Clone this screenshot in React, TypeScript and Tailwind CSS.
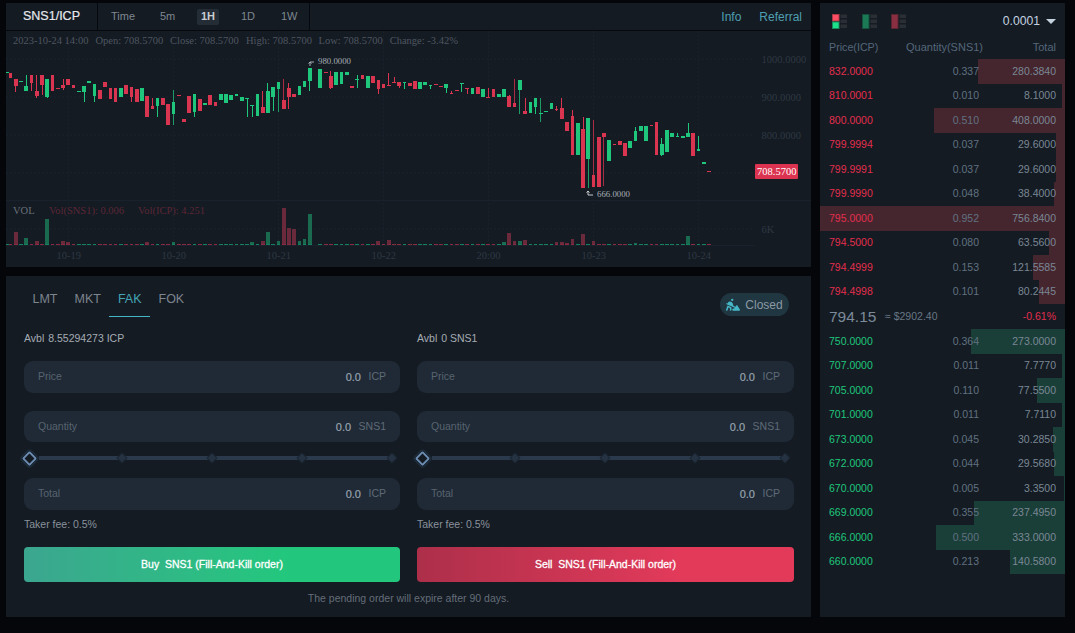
import { FaPersonDigging } from "react-icons/fa6";

const R = "#d93450";
const G = "#1fc77c";
const RD = "#6a2a3c";
const GD = "#1a6a50";

// [x, bodyTop, bodyBottom, wickTop, wickBottom, up(1)/down(0)] in 3x page coordinates
const c: number[][] = [
  [20, 216, 219, 216, 219, 1], [31, 218, 234, 218, 234, 0], [47, 237, 257, 237, 275, 0], [63, 243, 247, 243, 247, 1],
  [78, 258, 272, 225, 272, 1], [94, 224, 248, 224, 272, 0], [110, 273, 287, 224, 293, 0], [126, 224, 255, 224, 285, 0],
  [141, 237, 290, 237, 294, 1], [157, 225, 272, 225, 272, 0], [173, 264, 266, 264, 266, 0], [189, 255, 263, 238, 270, 0],
  [204, 237, 255, 237, 255, 0], [220, 255, 265, 255, 265, 0], [236, 272, 274, 272, 274, 1], [252, 258, 275, 258, 305, 1],
  [267, 243, 248, 243, 248, 1], [283, 252, 287, 252, 305, 1], [299, 270, 296, 270, 296, 0], [315, 247, 261, 247, 261, 0],
  [331, 264, 296, 264, 296, 0], [346, 265, 305, 265, 305, 0], [362, 265, 290, 265, 290, 1], [378, 255, 282, 255, 282, 0],
  [394, 261, 290, 261, 305, 0], [410, 268, 305, 268, 305, 0], [425, 264, 304, 264, 304, 1], [441, 288, 352, 288, 352, 0],
  [457, 318, 326, 293, 326, 0], [472, 294, 318, 294, 352, 1], [488, 294, 315, 294, 315, 0], [504, 312, 374, 312, 374, 0],
  [520, 306, 342, 270, 375, 1], [536, 285, 288, 285, 288, 0], [551, 358, 365, 358, 365, 0], [567, 288, 340, 288, 340, 0],
  [583, 282, 335, 282, 352, 1], [599, 297, 332, 297, 332, 0], [614, 310, 316, 310, 316, 1], [630, 285, 314, 285, 314, 0],
  [646, 305, 317, 305, 317, 0], [662, 282, 300, 282, 300, 1], [677, 282, 308, 282, 308, 1], [693, 286, 300, 286, 300, 1],
  [709, 282, 288, 282, 288, 1], [725, 291, 302, 291, 302, 1], [741, 293, 295, 293, 352, 1], [756, 315, 317, 315, 350, 1],
  [772, 282, 347, 282, 347, 1], [788, 321, 338, 272, 338, 0], [803, 274, 338, 248, 338, 1], [819, 261, 291, 261, 333, 1],
  [835, 247, 268, 247, 335, 1], [851, 300, 326, 237, 326, 0], [866, 264, 291, 248, 326, 0], [882, 282, 291, 282, 291, 0],
  [898, 258, 285, 258, 285, 1], [913, 243, 261, 243, 261, 1], [929, 204, 243, 204, 272, 1], [960, 207, 265, 207, 265, 1],
  [977, 217, 220, 217, 220, 0], [992, 229, 265, 213, 268, 0], [1008, 216, 255, 216, 255, 1], [1024, 216, 253, 216, 253, 1],
  [1040, 216, 224, 216, 224, 1], [1056, 258, 263, 258, 263, 0], [1071, 238, 240, 225, 265, 1], [1087, 225, 236, 225, 236, 0],
  [1103, 229, 264, 229, 264, 1], [1119, 229, 249, 229, 249, 0], [1135, 240, 266, 240, 282, 0], [1150, 253, 264, 253, 264, 0],
  [1166, 256, 258, 220, 258, 0], [1182, 246, 248, 232, 248, 0], [1197, 245, 259, 245, 265, 0], [1213, 245, 249, 245, 267, 1],
  [1229, 250, 258, 250, 258, 0], [1245, 244, 266, 244, 266, 0], [1260, 247, 266, 247, 266, 1], [1275, 247, 254, 247, 254, 1],
  [1291, 255, 257, 255, 266, 1], [1307, 252, 254, 252, 254, 0], [1322, 258, 260, 258, 260, 0], [1338, 253, 265, 253, 278, 1],
  [1354, 279, 281, 273, 281, 0], [1370, 270, 272, 270, 272, 0], [1385, 250, 252, 250, 275, 1], [1401, 264, 266, 264, 282, 0],
  [1417, 265, 282, 265, 282, 1], [1433, 261, 282, 261, 282, 0], [1449, 267, 290, 267, 290, 1], [1464, 291, 293, 264, 293, 0],
  [1480, 268, 291, 268, 291, 0], [1496, 282, 290, 282, 290, 1], [1512, 267, 290, 267, 290, 1], [1527, 288, 321, 285, 321, 0],
  [1543, 308, 321, 237, 321, 0], [1559, 240, 270, 240, 342, 1], [1575, 333, 342, 294, 342, 0], [1591, 305, 339, 305, 339, 1],
  [1606, 294, 320, 294, 342, 1], [1622, 339, 341, 294, 365, 1], [1638, 333, 335, 333, 335, 1], [1654, 310, 327, 310, 327, 1],
  [1669, 327, 329, 318, 332, 0], [1685, 324, 357, 294, 357, 0], [1701, 365, 392, 365, 392, 0], [1717, 348, 465, 331, 465, 0],
  [1733, 368, 465, 368, 465, 1], [1749, 388, 563, 352, 563, 0], [1764, 354, 477, 354, 564, 1], [1780, 525, 561, 360, 561, 0],
  [1796, 412, 561, 412, 561, 0], [1811, 400, 410, 400, 558, 0], [1827, 420, 483, 420, 483, 1], [1843, 432, 434, 432, 434, 0],
  [1859, 423, 435, 423, 435, 0], [1875, 428, 467, 428, 467, 0], [1890, 424, 443, 424, 443, 1], [1906, 393, 423, 380, 423, 1],
  [1922, 378, 393, 378, 393, 1], [1938, 378, 423, 378, 423, 1], [1954, 375, 377, 375, 377, 0], [1969, 365, 465, 365, 465, 0],
  [1985, 432, 465, 414, 468, 1], [2001, 390, 456, 390, 456, 1], [2016, 400, 410, 400, 410, 1], [2032, 409, 411, 400, 412, 1],
  [2048, 408, 413, 408, 413, 1], [2064, 400, 410, 369, 412, 1], [2079, 399, 468, 399, 468, 0], [2095, 447, 453, 408, 453, 1],
  [2111, 486, 491, 486, 491, 1], [2127, 514, 516, 514, 516, 0],
];

// [x, top, up] in 3x page coordinates
const vol: number[][] = [
  [47, 696, 0], [78, 714, 1], [110, 723, 0], [141, 657, 1], [189, 723, 0], [204, 726, 0], [441, 726, 0], [520, 726, 1],
  [756, 726, 1], [788, 723, 0], [803, 696, 1], [835, 723, 1], [851, 624, 0], [866, 684, 0], [882, 687, 0], [898, 723, 1],
  [913, 717, 1], [929, 642, 1], [1134, 723, 0], [1166, 720, 0], [1512, 726, 1], [1527, 698, 0], [1543, 723, 0], [1559, 723, 1],
  [1575, 720, 0], [1669, 726, 0], [1685, 726, 0], [1701, 729, 0], [1717, 717, 0], [1749, 702, 0], [1780, 723, 0], [1906, 729, 1],
  [2064, 708, 1],
];

const gridX = [68.3, 173.3, 278.3, 383.3, 488.3, 593.3, 698.3];
const gridY = [59, 97, 135, 173, 229];

function Chart() {
  return (
    <svg viewBox="6 31 805 236" className="block h-[236px] w-[805px] font-['Liberation_Serif',serif]">
      {gridX.map((x) => (
        <line key={x} x1={x} x2={x} y1={31} y2={245} stroke="#19222c" strokeWidth={1} strokeDasharray="2 2" />
      ))}
      {gridY.map((y) => (
        <line key={y} x1={6} x2={755} y1={y} y2={y} stroke="#19222c" strokeWidth={1} strokeDasharray="2 2" />
      ))}
      <line x1={6} x2={811} y1={200.5} y2={200.5} stroke="#19222c" />
      <line x1={6} x2={755} y1={245.5} y2={245.5} stroke="#19222c" />

      <g fontSize={10.5} fill="#4f5660">
        <text x={13} y={44}>2023-10-24 14:00</text>
        <text x={95.5} y={44}>Open: 708.5700</text>
        <text x={170} y={44}>Close: 708.5700</text>
        <text x={246} y={44}>High: 708.5700</text>
        <text x={318.5} y={44}>Low: 708.5700</text>
        <text x={389.7} y={44}>Change: -3.42%</text>
      </g>

      <g transform="scale(0.33333)" shapeRendering="crispEdges">
        {c.map(([x, t, b, wt, wb, up], i) => (
          <g key={i} fill={up ? G : R}>
            <rect x={x - 1} y={wt} width={3} height={wb - wt} opacity={wb - wt > b - t + 60 ? 0.75 : 1} />
            <rect x={x - 5} y={t} width={11} height={Math.max(b - t, 3)} />
          </g>
        ))}
        {vol.map(([x, t, up], i) => (
          <rect key={i} x={x - 5} y={t} width={11} height={734 - t} fill={up ? GD : RD} />
        ))}
        {c.map(([x, , , , , up], i) => (
          <rect key={i} x={x - 5} y={732} width={11} height={3} fill={up ? "#15805c" : "#8a2a40"} />
        ))}
      </g>

      <g fontSize={10.5} fill="#2f3842">
        <text x={761.5} y={63}>1000.0000</text>
        <text x={761.5} y={101}>900.0000</text>
        <text x={761.5} y={139}>800.0000</text>
        <text x={761.5} y={233}>6K</text>
        <text x={56.5} y={259}>10-19</text>
        <text x={161.5} y={259}>10-20</text>
        <text x={266.5} y={259}>10-21</text>
        <text x={371.5} y={259}>10-22</text>
        <text x={476.5} y={259}>20:00</text>
        <text x={581.5} y={259}>10-23</text>
        <text x={686.5} y={259}>10-24</text>
      </g>

      <g fontSize={8.8} fill="#a8adb3">
        <text x={318} y={64}>980.0000</text>
        <text x={597} y={197}>666.0000</text>
      </g>
      <path d="M314 62h-4v4M308.500 63.500l1.500-1.500 1.500 1.500" fill="none" stroke="#a8adb3" strokeWidth={1} />
      <path d="M593 195h-5v-4M586.500 192.500l1.500-1.500 1.500 1.500" fill="none" stroke="#c8ccd0" strokeWidth={1} />

      <rect x={755} y={164} width={43} height={15} rx={1} fill="#dc3350" />
      <text x={757} y={175} fontSize={10.5} fill="#ffffff">708.5700</text>

      <g fontSize={10.5}>
        <text x={13} y={214} fill="#6a7078">VOL</text>
        <text x={49} y={214} fill="#5c2636">Vol(SNS1): 0.006</text>
        <text x={138} y={214} fill="#5c2636">Vol(ICP): 4.251</text>
      </g>
    </svg>
  );
}

function Field({ label, unit, className = "" }: { label: string; unit: string; className?: string }) {
  return (
    <div className={"flex items-center justify-between rounded-[9px] bg-[#1f2a36] px-[14px] text-[10.5px] " + className}>
      <span className="-mt-[1px] text-[#58636f]">{label}</span>
      <span className="flex items-center gap-[7.5px]">
        <span className="text-[11px] text-[#98a3ae] [-webkit-text-stroke:0.2px_#98a3ae]">0.0</span>
        <span className="-mt-[1px] text-[#5f6a76]">{unit}</span>
      </span>
    </div>
  );
}

function Slider({ track, stops }: { track: string; stops: string[] }) {
  return (
    <div className="relative mt-[9px] h-[14px]">
      <div className={"absolute left-[15px] top-[5px] h-[4px] bg-[#2a394b] " + track} />
      {stops.map((s) => (
        <div key={s} className={"absolute top-[3px] h-[8px] w-[8px] rotate-45 rounded-[1px] border border-[#1b2633] bg-[#253241] " + s} />
      ))}
      <div className="absolute left-0 top-[1.500px] h-[11px] w-[11px] rotate-45 rounded-[1.500px] border-[2px] border-[#6b8bb0] bg-[#141b23] outline outline-[2.500px] outline-[#1c2a38]" />
    </div>
  );
}

function Side({ avbl, action, btn, width }: { avbl: string; action: string; btn: string; width: string }) {
  return (
    <div className={width}>
      <div className="flex h-[14px] gap-[4px] text-[10.5px] leading-[14px] text-[#a5acb4]">
        <span>Avbl</span>
        <span>{avbl}</span>
      </div>
      <Field label="Price" unit="ICP" className="mt-[16px] h-[32px]" />
      <Field label="Quantity" unit="SNS1" className="mt-[18px] h-[31px] pt-[1px]" />
      <Slider track="right-[8px]" stops={["left-[94px]", "left-[184px]", "left-[274px]", "left-[364px]"]} />
      <Field label="Total" unit="ICP" className="mt-[13px] h-[32px]" />
      <div className="mt-[7px] h-[14px] text-[10.5px] leading-[14px] text-[#8a929b]">Taker fee: 0.5%</div>
      <button className={"mt-[16px] flex h-[35px] w-full items-center justify-center rounded-[4px] text-[10.5px] text-white [-webkit-text-stroke:0.3px_#ffffff] " + btn}>
        {action}&nbsp; SNS1 (Fill-And-Kill order)
      </button>
    </div>
  );
}

const asks: [string, string, string, number][] = [
  ["832.0000", "0.337", "280.3840", 87], ["810.0001", "0.010", "8.1000", 3], ["800.0000", "0.510", "408.0000", 131],
  ["799.9994", "0.037", "29.6000", 9], ["799.9991", "0.037", "29.6000", 9], ["799.9990", "0.048", "38.4000", 11],
  ["795.0000", "0.952", "756.8400", 245], ["794.5000", "0.080", "63.5600", 16], ["794.4999", "0.153", "121.5585", 32],
  ["794.4998", "0.101", "80.2445", 26],
];
const bids: [string, string, string, number][] = [
  ["750.0000", "0.364", "273.0000", 94], ["707.0000", "0.011", "7.7770", 3], ["705.0000", "0.110", "77.5500", 28],
  ["701.0000", "0.011", "7.7110", 3], ["673.0000", "0.045", "30.2850", 12], ["672.0000", "0.044", "29.5680", 11],
  ["670.0000", "0.005", "3.3500", 1], ["669.0000", "0.355", "237.4950", 91], ["666.0000", "0.500", "333.0000", 129],
  ["660.0000", "0.213", "140.5800", 55],
];

function Row({ d, side }: { d: [string, string, string, number]; side: "a" | "b" }) {
  return (
    <div className="relative flex h-[24.500px] items-center px-[9px] pt-[1px] text-[10.500px]">
      <div className={"absolute bottom-0 right-0 top-0 " + (side === "a" ? "bg-[#45262f]" : "bg-[#1a3f39]")} style={{ width: d[3] }} />
      <span className={"relative w-[100px] " + (side === "a" ? "text-[#e32e4d]" : "text-[#1fc77c]")}>{d[0]}</span>
      <span className="relative w-[50px] text-right text-[#617180]">{d[1]}</span>
      <span className="relative flex-1 text-right text-[#7a8794]">{d[2]}</span>
    </div>
  );
}

function BookLines() {
  return (
    <>
      <rect x="8.500" y="0.500" width="6.500" height="3.500" fill="#2a2f35" />
      <rect x="8.500" y="5.500" width="6.500" height="3.500" fill="#2a2f35" />
      <rect x="8.500" y="10.500" width="6.500" height="3.500" fill="#2a2f35" />
    </>
  );
}

function BookIcons() {
  return (
    <div className="flex gap-[14.500px]">
      <svg width="15" height="15" viewBox="0 0 15 15" className="block">
        <rect x="0.500" y="0.500" width="6.500" height="6.500" fill="#ff4d63" stroke="#a83a48" />
        <rect x="0.500" y="8" width="6.500" height="6.500" fill="#1de08a" stroke="#178a5c" />
        <BookLines />
      </svg>
      <svg width="15" height="15" viewBox="0 0 15 15" className="block">
        <rect x="0.500" y="0.500" width="6.500" height="14" fill="#1b7a55" stroke="#14503c" />
        <BookLines />
      </svg>
      <svg width="15" height="15" viewBox="0 0 15 15" className="block">
        <rect x="0.500" y="0.500" width="6.500" height="14" fill="#8a2f42" stroke="#5a2533" />
        <BookLines />
      </svg>
    </div>
  );
}

export default function App() {
  return (
    <div className="flex h-[633px] w-[1075px] gap-[9px] overflow-hidden bg-[#04060a] pl-[6px] pt-[3px] font-['Liberation_Sans',Arial,sans-serif]">
      <div className="w-[805px]">
        <div className="flex h-[28px] items-center border-b border-[#05080c] bg-[#141b23] text-[11px]">
          <div className="flex h-full w-[92px] items-center border-r border-[#05080c] pl-[17px] text-[12.500px] text-[#e6e9ec] [-webkit-text-stroke:0.2px_#e6e9ec]">SNS1/ICP</div>
          <div className="flex h-full w-[212px] items-center border-r border-[#05080c] text-[#7f8790]">
            <span className="ml-[13px] w-[23px]">Time</span>
            <span className="ml-[26px] w-[15px]">5m</span>
            <span className="ml-[22px] flex h-[16px] w-[22px] items-center justify-center rounded-[2px] bg-[#242c35] font-bold text-[#c9ced3]">1H</span>
            <span className="ml-[22px] w-[13px]">1D</span>
            <span className="ml-[27px]">1W</span>
          </div>
          <div className="ml-auto flex gap-[18px] pr-[9px] text-[12px] text-[#4f9fb0]">
            <span>Info</span>
            <span>Referral</span>
          </div>
        </div>
        <div className="h-[236px] bg-[#141b23]">
          <Chart />
        </div>
        <div className="mt-[9px] h-[341px] bg-[#141b23] px-[18px]">
          <div className="flex h-[55px] items-start justify-between">
            <div className="mt-[12px] flex text-[12.500px] text-[#7d858f]">
              <span className="px-[8.500px] pb-[7px] pt-[2px]">LMT</span>
              <span className="px-[8.500px] pb-[7px] pt-[2px]">MKT</span>
              <span className="border-b border-[#45b6c6] px-[8.500px] pb-[7px] pt-[2px] text-[#45a5b5]">FAK</span>
              <span className="px-[8.500px] pb-[7px] pt-[2px]">FOK</span>
            </div>
            <div className="mr-[4px] mt-[17px] flex h-[23px] w-[69px] items-center justify-center gap-[5px] rounded-full bg-[#203640] text-[12px] text-[#8b99a5]">
              <FaPersonDigging className="h-[13px] w-[14px] text-[#45b6c6]" />
              Closed
            </div>
          </div>
          <div className="flex w-[770px] gap-[17px]">
            <Side width="w-[376px]" avbl="8.55294273 ICP" action="Buy" btn="bg-gradient-to-r from-[#3ba68f] to-[#22c77d] to-70%" />
            <Side width="w-[377px]" avbl="0 SNS1" action="Sell" btn="bg-gradient-to-r from-[#ad2f4a] to-[#e33a5a] to-70%" />
          </div>
          <div className="mt-[9px] text-center text-[10.500px] text-[#646d78]">The pending order will expire after 90 days.</div>
        </div>
      </div>

      <div className="h-[614px] w-[245px] bg-[#141b23]">
        <div className="flex h-[32px] items-center pl-[12px] pr-[9px] pt-[5px]">
          <BookIcons />
          <div className="ml-auto flex items-center gap-[6px] text-[12.200px] leading-[15px] text-[#c5d3e0]">
            0.0001
            <span className="h-0 w-0 border-x-[5px] border-t-[5px] border-x-transparent border-t-[#c5d3e0]" />
          </div>
        </div>
        <div className="flex h-[24px] items-center px-[9px] pt-[1px] text-[#54677a]">
          <span className="w-[70px] text-[10.700px]">Price(ICP)</span>
          <span className="w-[84px] text-right text-[11px]">Quantity(SNS1)</span>
          <span className="flex-1 text-right text-[11px]">Total</span>
        </div>
        {asks.map((d) => (
          <Row key={d[0]} d={d} side="a" />
        ))}
        <div className="flex h-[25px] items-center px-[9px]">
          <span className="w-[56px] text-[15.500px] text-[#7c8a99]">794.15</span>
          <span className="text-[10.500px] text-[#687683]">≈ $2902.40</span>
          <span className="ml-auto text-[10.500px] text-[#e32e4d]">-0.61%</span>
        </div>
        {bids.map((d) => (
          <Row key={d[0]} d={d} side="b" />
        ))}
      </div>
    </div>
  );
}
